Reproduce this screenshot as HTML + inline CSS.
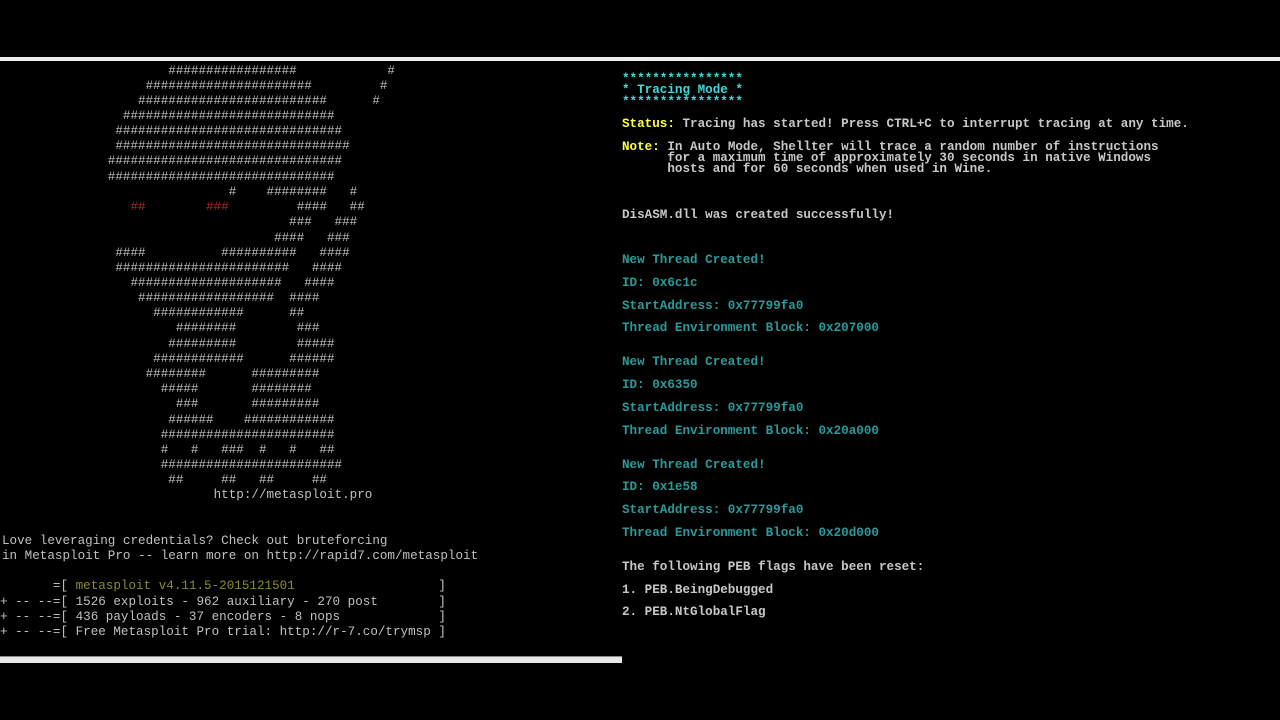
<!DOCTYPE html>
<html><head><meta charset="utf-8"><style>
body{margin:0;width:1280px;height:720px;background:#000;overflow:hidden;position:relative;font-family:"Liberation Mono",monospace;}
.l{position:absolute;white-space:pre;font-size:12.6px;line-height:14px;color:#c0c0c0;}
.a{left:2px}
.r{left:622px;font-weight:bold;color:#c8c8c8}
.red{color:#b02828}
.c{color:#40d8d8}
.t{color:#2a9a9a}
.y{color:#ffff40}
.o{color:#8a8a30}
</style></head><body>
<div style="position:absolute;left:0;top:57px;width:1280px;height:4px;background:#eee"></div>
<div style="position:absolute;left:0;top:656px;width:622px;height:6px;background:#e8e8e8;border-top:1px solid #888"></div>

<div class="l a" style="top:64px">                      #################            #</div>
<div class="l a" style="top:79px">                   ######################         #</div>
<div class="l a" style="top:94px">                  #########################      #</div>
<div class="l a" style="top:109px">                ############################</div>
<div class="l a" style="top:124px">               ##############################</div>
<div class="l a" style="top:139px">               ###############################</div>
<div class="l a" style="top:154px">              ###############################</div>
<div class="l a" style="top:170px">              ##############################</div>
<div class="l a" style="top:185px">                              #    ########   #</div>
<div class="l a" style="top:200px">                 <span class="red">##</span>        <span class="red">###</span>         ####   ##</div>
<div class="l a" style="top:215px">                                      ###   ###</div>
<div class="l a" style="top:231px">                                    ####   ###</div>
<div class="l a" style="top:246px">               ####          ##########   ####</div>
<div class="l a" style="top:261px">               #######################   ####</div>
<div class="l a" style="top:276px">                 ####################   ####</div>
<div class="l a" style="top:291px">                  ##################  ####</div>
<div class="l a" style="top:306px">                    ############      ##</div>
<div class="l a" style="top:321px">                       ########        ###</div>
<div class="l a" style="top:337px">                      #########        #####</div>
<div class="l a" style="top:352px">                    ############      ######</div>
<div class="l a" style="top:367px">                   ########      #########</div>
<div class="l a" style="top:382px">                     #####       ########</div>
<div class="l a" style="top:397px">                       ###       #########</div>
<div class="l a" style="top:413px">                      ######    ############</div>
<div class="l a" style="top:428px">                     #######################</div>
<div class="l a" style="top:443px">                     #   #   ###  #   #   ##</div>
<div class="l a" style="top:458px">                     ########################</div>
<div class="l a" style="top:473px">                      ##     ##   ##     ##</div>
<div class="l a" style="top:488px">                            http://metasploit.pro</div>
<div class="l a" style="top:534px">Love leveraging credentials? Check out bruteforcing</div>
<div class="l a" style="top:549px">in Metasploit Pro -- learn more on http://rapid7.com/metasploit</div>
<div class="l a" style="top:579px;left:0">       =[ <span class="o">metasploit v4.11.5-2015121501</span>                   ]</div>
<div class="l a" style="top:595px;left:0">+ -- --=[ 1526 exploits - 962 auxiliary - 270 post        ]</div>
<div class="l a" style="top:610px;left:0">+ -- --=[ 436 payloads - 37 encoders - 8 nops             ]</div>
<div class="l a" style="top:625px;left:0">+ -- --=[ Free Metasploit Pro trial: http://r-7.co/trymsp ]</div>

<div class="l r c" style="top:72px">****************</div>
<div class="l r c" style="top:83px">* Tracing Mode *</div>
<div class="l r c" style="top:95px">****************</div>
<div class="l r" style="top:117px"><span class="y">Status:</span> Tracing has started! Press CTRL+C to interrupt tracing at any time.</div>
<div class="l r" style="top:140px"><span class="y">Note:</span> In Auto Mode, Shellter will trace a random number of instructions</div>
<div class="l r" style="top:151px">      for a maximum time of approximately 30 seconds in native Windows</div>
<div class="l r" style="top:162px">      hosts and for 60 seconds when used in Wine.</div>
<div class="l r" style="top:208px">DisASM.dll was created successfully!</div>
<div class="l r t" style="top:253px">New Thread Created!</div>
<div class="l r t" style="top:276px">ID: 0x6c1c</div>
<div class="l r t" style="top:299px">StartAddress: 0x77799fa0</div>
<div class="l r t" style="top:321px">Thread Environment Block: 0x207000</div>
<div class="l r t" style="top:355px">New Thread Created!</div>
<div class="l r t" style="top:378px">ID: 0x6350</div>
<div class="l r t" style="top:401px">StartAddress: 0x77799fa0</div>
<div class="l r t" style="top:424px">Thread Environment Block: 0x20a000</div>
<div class="l r t" style="top:458px">New Thread Created!</div>
<div class="l r t" style="top:480px">ID: 0x1e58</div>
<div class="l r t" style="top:503px">StartAddress: 0x77799fa0</div>
<div class="l r t" style="top:526px">Thread Environment Block: 0x20d000</div>
<div class="l r" style="top:560px">The following PEB flags have been reset:</div>
<div class="l r" style="top:583px">1. PEB.BeingDebugged</div>
<div class="l r" style="top:605px">2. PEB.NtGlobalFlag</div>
</body></html>
